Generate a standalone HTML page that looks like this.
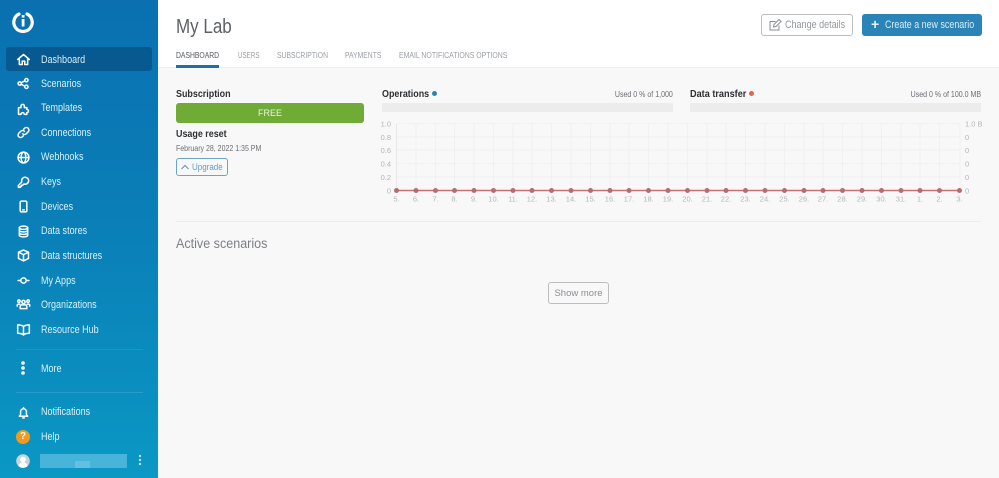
<!DOCTYPE html>
<html><head><meta charset="utf-8"><style>
html,body{margin:0;padding:0;width:999px;height:478px;overflow:hidden;background:#f8f8f9;font-family:"Liberation Sans",sans-serif}
.a{position:absolute;white-space:nowrap}
#side{position:absolute;left:0;top:0;width:158px;height:478px;background:linear-gradient(180deg,#0a70b0 0%,#0a80b8 50%,#0a98c4 100%)}
.n{position:absolute;left:41px;color:#d9f0fa;font-size:11px;line-height:14px;white-space:nowrap;transform:scaleX(.82);transform-origin:0 50%;margin-top:0.5px}
.i{position:absolute;left:14px;width:15px;height:15px;margin:1.5px;fill:none;stroke:#fff;stroke-width:1.8;stroke-linecap:round;stroke-linejoin:round}
.tab{position:absolute;top:51px;font-size:8px;line-height:10px;color:#9a9ea3;white-space:nowrap;transform:scaleX(.85);transform-origin:0 50%}
h4{margin:0;position:absolute;font-size:10.5px;line-height:12px;font-weight:bold;color:#2d3033;white-space:nowrap;transform:scaleX(.85);transform-origin:0 50%}
.r{transform:scaleX(.88);transform-origin:100% 50%}
.l{transform-origin:0 50%}
svg text{font-family:"Liberation Sans",sans-serif}
</style></head><body>
<div id="side">
<svg class="a" style="left:11px;top:9px" width="24" height="25" viewBox="0 0 24 25"><path d="M8 5A9.200 9.200 0 1 0 16 5" fill="none" stroke="#fff" stroke-width="3.200" stroke-linecap="round"/><rect x="10.700" y="10" width="2.800" height="7.500" fill="#fff"/><rect x="10.700" y="6" width="2.800" height="2.600" fill="#fff"/></svg>
<div class="a" style="left:6px;top:47px;width:146px;height:24px;background:#07598f;border-radius:3px"></div>

<svg class="i" style="top:50px" viewBox="0 0 18 18"><path d="M2 9L9 3l7 6M4 8v7h3.500v-4h3v4H14V8"/></svg>
<div class="n" style="top:52px">Dashboard</div>
<svg class="i" style="top:74px" viewBox="0 0 18 18"><circle cx="4.500" cy="9" r="2"/><circle cx="12.500" cy="5" r="2"/><circle cx="12.500" cy="13" r="2"/><path d="M6.300 8l4.400-2.200M6.300 10l4.400 2.200"/></svg>
<div class="n" style="top:76px">Scenarios</div>
<svg class="i" style="top:99px" viewBox="0 0 18 18"><path d="M3 16V8h3V6a2 2 0 0 1 4 0v2h3v2a2 2 0 0 1 0 4v2h-3a2 2 0 0 0-4 0z"/></svg>
<div class="n" style="top:100px">Templates</div>
<svg class="i" style="top:123px" viewBox="0 0 18 18"><path d="M8 10.500a3 3 0 0 0 4.300 0l2.300-2.300a3 3 0 0 0-4.300-4.300L9.300 5M10 7.500a3 3 0 0 0-4.300 0l-2.300 2.300a3 3 0 0 0 4.300 4.300L8.700 13"/></svg>
<div class="n" style="top:125px">Connections</div>
<svg class="i" style="top:148px" viewBox="0 0 18 18"><circle cx="9" cy="9" r="6.500"/><ellipse cx="9" cy="9" rx="2.800" ry="6.500"/><path d="M2.500 9h13"/></svg>
<div class="n" style="top:149px">Webhooks</div>
<svg class="i" style="top:172px" viewBox="0 0 18 18"><path d="M7 9.500a4.200 4.200 0 1 1 2.500 2.500L8 13.500H6.500V15H5v1H2.800v-2.200z"/></svg>
<div class="n" style="top:174px">Keys</div>
<svg class="i" style="top:197px" viewBox="0 0 18 18"><rect x="5" y="2.500" width="8" height="13" rx="1.500"/><path d="M8 13h2"/></svg>
<div class="n" style="top:199px">Devices</div>
<svg class="i" style="top:222px" viewBox="0 0 18 18"><ellipse cx="9" cy="4.500" rx="5" ry="2"/><path d="M4 4.500v9c0 1.100 2.200 2 5 2s5-.9 5-2v-9M4 7.500c0 1.100 2.200 2 5 2s5-.9 5-2M4 10.500c0 1.100 2.200 2 5 2s5-.9 5-2"/></svg>
<div class="n" style="top:223px">Data stores</div>
<svg class="i" style="top:246px" viewBox="0 0 18 18"><path d="M9 2.500l6 2.500v7.500l-6 3-6-3V5zM3 5l6 3 6-3M9 8v7.500"/></svg>
<div class="n" style="top:248px">Data structures</div>
<svg class="i" style="top:271px" viewBox="0 0 18 18"><circle cx="9" cy="9" r="3.200"/><path d="M2.500 9h3M12.500 9h3"/></svg>
<div class="n" style="top:273px">My Apps</div>
<svg class="i" style="top:295px" viewBox="0 0 18 18"><circle cx="9" cy="6" r="2"/><circle cx="3.500" cy="5" r="1.500"/><circle cx="14.500" cy="5" r="1.500"/><path d="M5 14v-2.500a2 2 0 0 1 2-2h4a2 2 0 0 1 2 2V14zM1.500 11V9.500a1.500 1.500 0 0 1 1.500-1h1.500M16.500 11V9.500a1.500 1.500 0 0 0-1.500-1h-1.500"/></svg>
<div class="n" style="top:297px">Organizations</div>
<svg class="i" style="top:320px" viewBox="0 0 18 18"><path d="M9 5.500C7.500 4 5 3.500 2 3.500v10c3 0 5.500.5 7 2 1.500-1.500 4-2 7-2v-10c-3 0-5.500.5-7 2zM9 5.500v10"/></svg>
<div class="n" style="top:322px">Resource Hub</div>

<div class="a" style="left:16px;top:349px;width:127px;height:1px;background:#2a90c4"></div>
<svg class="a" style="left:14px;top:359px" width="18" height="18" viewBox="0 0 18 18"><circle cx="9" cy="4" r="1.800" fill="#fff"/><circle cx="9" cy="9" r="1.800" fill="#fff"/><circle cx="9" cy="14" r="1.800" fill="#fff"/></svg>
<div class="n" style="top:361px">More</div>
<div class="a" style="left:16px;top:392px;width:127px;height:1px;background:#2a9ccb"></div>

<svg class="i" style="top:403px" viewBox="0 0 18 18"><path d="M4 13.500h10l-1.500-2V8a3.500 3.500 0 0 0-7 0v3.500zM8 15.500h2M9 3v1"/></svg>
<div class="n" style="top:404px">Notifications</div>
<div class="a" style="left:16px;top:430px;width:14px;height:14px;border-radius:50%;background:#f39a1c;color:#fff;font-size:10px;font-weight:bold;line-height:14px;text-align:center">?</div>
<div class="n" style="top:429px">Help</div>
<svg class="a" style="left:16px;top:454px" width="14" height="14" viewBox="0 0 14 14"><circle cx="7" cy="7" r="6.800" fill="#c9d3d9"/><circle cx="7" cy="5.500" r="2.800" fill="#fff"/><path d="M2.300 12a4.800 4.800 0 0 1 9.400 0A6.800 6.800 0 0 1 2.300 12z" fill="#fff"/></svg>
<div class="a" style="left:40px;top:454px;width:87px;height:14px;background:#49b4d9"></div>
<div class="a" style="left:75px;top:461px;width:15px;height:7px;background:#62c0e0"></div>
<svg class="a" style="left:136px;top:453px" width="8" height="14" viewBox="0 0 8 14"><circle cx="4" cy="3" r="1.200" fill="#bfe3f2"/><circle cx="4" cy="7" r="1.200" fill="#bfe3f2"/><circle cx="4" cy="11" r="1.200" fill="#bfe3f2"/></svg>
</div>

<div class="a" style="left:158px;top:0;width:841px;height:68px;background:#fff;border-bottom:1px solid #efefef;box-sizing:border-box"></div>
<div class="a l" style="left:176px;top:14px;font-size:20px;line-height:26px;color:#5d6166;transform:scaleX(.85)">My Lab</div>
<div class="tab" style="left:176px;color:#55595e">DASHBOARD</div>
<div class="tab" style="left:238px;transform:scaleX(.78)">USERS</div>
<div class="tab" style="left:277px">SUBSCRIPTION</div>
<div class="tab" style="left:345px">PAYMENTS</div>
<div class="tab" style="left:399px;transform:scaleX(.865)">EMAIL NOTIFICATIONS OPTIONS</div>
<div class="a" style="left:176px;top:65px;width:43px;height:3px;background:#1e6ea8"></div>

<div class="a" style="left:761px;top:14px;width:92px;height:22px;box-sizing:border-box;border:1px solid #bdbdbd;border-radius:3px;background:#fff"></div>
<svg class="a" style="left:768px;top:18px" width="14" height="14" viewBox="0 0 14 14" fill="none" stroke="#8a8e92" stroke-width="1"><path d="M11 7.500V12H2V3.500h5.500M5.500 9l.5-2.500L11 1.500l2 2-5 5z"/></svg>
<div class="a l" style="left:785px;top:19px;font-size:11px;line-height:13px;color:#94989c;transform:scaleX(.82)">Change details</div>
<div class="a" style="left:862px;top:14px;width:120px;height:22px;background:#2b84b8;border-radius:3px"></div>
<div class="a" style="left:871px;top:17px;font-size:14px;line-height:15px;font-weight:bold;color:#e6f3fa">+</div>
<div class="a l" style="left:885px;top:19px;font-size:11px;line-height:13px;color:#d9edf7;transform:scaleX(.81)">Create a new scenario</div>

<h4 style="left:176px;top:88px">Subscription</h4>
<div class="a" style="left:176px;top:102.500px;width:188px;height:20px;background:#6fab35;border-radius:3px;color:#e9f5da;font-size:9px;line-height:21px;text-align:center">FREE</div>
<h4 style="left:176px;top:128px">Usage reset</h4>
<div class="a l" style="left:176px;top:143px;font-size:8px;line-height:11px;color:#6a6e73;transform:scaleX(.876)">February 28, 2022 1:35 PM</div>
<div class="a" style="left:176px;top:158px;width:52px;height:18px;box-sizing:border-box;border:1px solid #6aa5c8;border-radius:3px"></div>
<svg class="a" style="left:180px;top:163px" width="10" height="8" viewBox="0 0 10 8" fill="none" stroke="#5f93b3" stroke-width="1"><path d="M1.500 6L5 2.500 8.500 6"/></svg>
<div class="a l" style="left:192px;top:161.500px;font-size:8.800px;line-height:11px;color:#5f9cc2;transform:scaleX(.91)">Upgrade</div>

<h4 style="left:381.500px;top:88px">Operations</h4>
<div class="a" style="left:432px;top:91px;width:5px;height:5px;border-radius:50%;background:#2b84b8"></div>
<div class="a r" style="right:326px;top:89px;font-size:8px;line-height:11px;color:#6a6e73">Used 0 % of 1,000</div>
<div class="a" style="left:382px;top:102.500px;width:291px;height:9.500px;background:#ececec"></div>
<h4 style="left:690px;top:88px;transform:scaleX(.87)">Data transfer</h4>
<div class="a" style="left:749px;top:91px;width:5px;height:5px;border-radius:50%;background:#e4644c"></div>
<div class="a r" style="right:18px;top:89px;font-size:8px;line-height:11px;color:#6a6e73">Used 0 % of 100.0 MB</div>
<div class="a" style="left:690px;top:102.500px;width:291px;height:9.500px;background:#ececec"></div>

<svg class="a" style="left:0;top:0" width="999" height="478" viewBox="0 0 999 478" id="c">
<g stroke="#f1f1f1" stroke-width="1">
<path d="M396.500 123.500H960M396.500 137H960M396.500 150H960M396.500 163.500H960M396.500 177H960"/>
<path d="M416 124V190M435.500 124V190M454.500 124V190M474 124V190M493.500 124V190M513 124V190M532 124V190M551.500 124V190M571 124V190M590.500 124V190M610 124V190M629 124V190M648.500 124V190M668 124V190M687.500 124V190M707 124V190M726 124V190M745.500 124V190M765 124V190M784.500 124V190M804 124V190M823 124V190M842.500 124V190M862 124V190M881.500 124V190M901 124V190M920 124V190M939.500 124V190M960 124V190"/>
</g>
<path d="M396.500 124V190" stroke="#e8e8e8"/>
<g font-size="7.500" fill="#b3b5b8" text-anchor="end">
<text x="391" y="126.500">1.0</text><text x="391" y="140">0.8</text><text x="391" y="153">0.6</text><text x="391" y="166.500">0.4</text><text x="391" y="180">0.2</text><text x="391" y="193.500">0</text>
</g>
<g font-size="7.500" fill="#b3b5b8">
<text x="965" y="126.500">1.0 B</text><text x="965" y="140">0</text><text x="965" y="153">0</text><text x="965" y="166.500">0</text><text x="965" y="180">0</text><text x="965" y="193.500">0</text>
</g>
<path d="M396.500 190.500H960" stroke="#c8716f" stroke-width="1.500"/>
<g fill="#b56d6e">
<circle cx="396.500" cy="190.500" r="2.500"/><circle cx="416" cy="190.500" r="2.500"/><circle cx="435.500" cy="190.500" r="2.500"/><circle cx="454.500" cy="190.500" r="2.500"/><circle cx="474" cy="190.500" r="2.500"/><circle cx="493.500" cy="190.500" r="2.500"/><circle cx="513" cy="190.500" r="2.500"/><circle cx="532" cy="190.500" r="2.500"/><circle cx="551.500" cy="190.500" r="2.500"/><circle cx="571" cy="190.500" r="2.500"/><circle cx="590.500" cy="190.500" r="2.500"/><circle cx="610" cy="190.500" r="2.500"/><circle cx="629" cy="190.500" r="2.500"/><circle cx="648.500" cy="190.500" r="2.500"/><circle cx="668" cy="190.500" r="2.500"/><circle cx="687.500" cy="190.500" r="2.500"/><circle cx="707" cy="190.500" r="2.500"/><circle cx="726" cy="190.500" r="2.500"/><circle cx="745.500" cy="190.500" r="2.500"/><circle cx="765" cy="190.500" r="2.500"/><circle cx="784.500" cy="190.500" r="2.500"/><circle cx="804" cy="190.500" r="2.500"/><circle cx="823" cy="190.500" r="2.500"/><circle cx="842.500" cy="190.500" r="2.500"/><circle cx="862" cy="190.500" r="2.500"/><circle cx="881.500" cy="190.500" r="2.500"/><circle cx="901" cy="190.500" r="2.500"/><circle cx="920" cy="190.500" r="2.500"/><circle cx="939.500" cy="190.500" r="2.500"/><circle cx="959.500" cy="190.500" r="2.500"/>
</g>
<g font-size="7.500" fill="#b3b5b8" text-anchor="middle">
<text x="396.500" y="201.500">5.</text><text x="416" y="201.500">6.</text><text x="435.500" y="201.500">7.</text><text x="454.500" y="201.500">8.</text><text x="474" y="201.500">9.</text><text x="493.500" y="201.500">10.</text><text x="513" y="201.500">11.</text><text x="532" y="201.500">12.</text><text x="551.500" y="201.500">13.</text><text x="571" y="201.500">14.</text><text x="590.500" y="201.500">15.</text><text x="610" y="201.500">16.</text><text x="629" y="201.500">17.</text><text x="648.500" y="201.500">18.</text><text x="668" y="201.500">19.</text><text x="687.500" y="201.500">20.</text><text x="707" y="201.500">21.</text><text x="726" y="201.500">22.</text><text x="745.500" y="201.500">23.</text><text x="765" y="201.500">24.</text><text x="784.500" y="201.500">25.</text><text x="804" y="201.500">26.</text><text x="823" y="201.500">27.</text><text x="842.500" y="201.500">28.</text><text x="862" y="201.500">29.</text><text x="881.500" y="201.500">30.</text><text x="901" y="201.500">31.</text><text x="920" y="201.500">1.</text><text x="939.500" y="201.500">2.</text><text x="959.500" y="201.500">3.</text>
</g>
</svg>

<div class="a" style="left:176px;top:221px;width:805px;height:1px;background:#ececec"></div>
<div class="a l" style="left:176px;top:235px;font-size:13.500px;line-height:17px;color:#7b7f84;transform:scaleX(.93)">Active scenarios</div>
<div class="a" style="left:548px;top:282px;width:61px;height:22px;box-sizing:border-box;border:1px solid #bdbdbd;border-radius:3px;color:#8a8e92;font-size:9.500px;line-height:22px;text-align:center">Show more</div>
</body></html>
